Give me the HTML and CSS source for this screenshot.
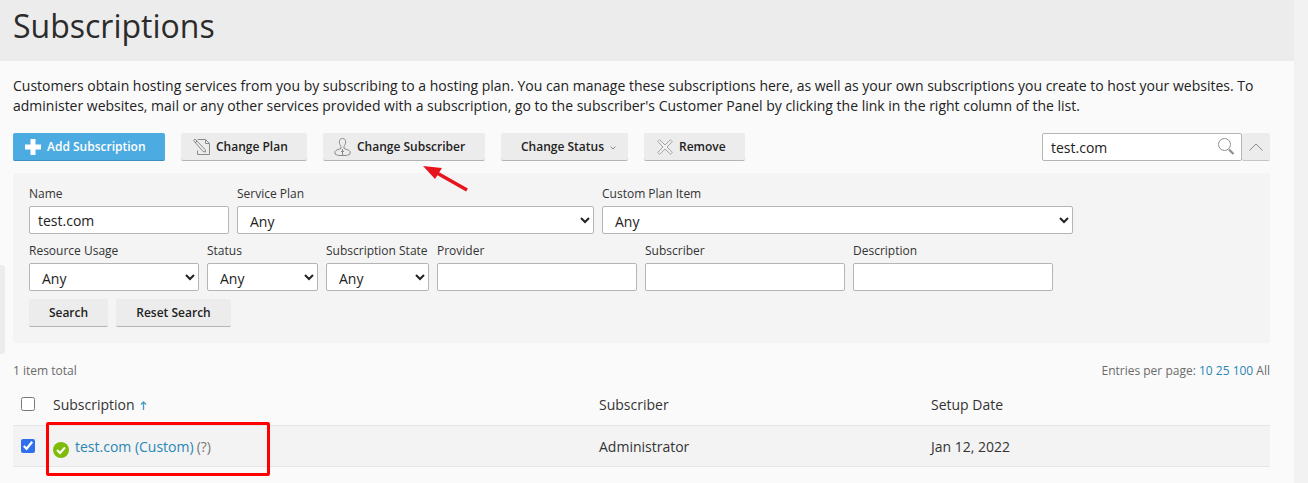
FILE: index.html
```html
<!DOCTYPE html>
<html lang="en">
<head>
<meta charset="utf-8">
<title>Subscriptions</title>
<link rel="stylesheet" href="styles.css">
</head>
<body>
<div class="handle"></div>
<main class="page">
  <header class="head"><h1>Subscriptions</h1></header>
  <div class="content">
    <p class="intro">Customers obtain hosting services from you by subscribing to a hosting plan. You can manage these subscriptions here, as well as your own subscriptions you create to host your websites. To administer websites, mail or any other services provided with a subscription, go to the subscriber's Customer Panel by clicking the link in the right column of the list.</p>
    <div class="toolbar">
      <button class="btn primary add"><svg class="ic" width="16" height="16" viewBox="0 0 16 16"><path d="M5.500 0h5v5.500H16v5h-5.500V16h-5v-5.500H0v-5h5.500z" fill="#fff"/></svg>Add Subscription</button>
      <button class="btn plan"><svg class="ic" width="17" height="18" viewBox="0 0 17 18" fill="none" stroke="#8a8a8a"><path d="M4.500 1.500h8l4 4v11h-12v-4"/><path d="M12.500 1.500v4h4"/><path d="M.5 2.500l1.500-1.500 10 10.500.5 2.500-2.500-.5z" fill="#ececec"/><path d="M2 5l2-2" stroke="#777"/></svg>Change Plan</button>
      <button class="btn subs"><svg class="ic" width="17" height="18" viewBox="0 0 17 18" fill="none" stroke="#8a8a8a"><path d="M8.500 .5c-2.200 0-3.200 1.600-3.200 3.500 0 2 1.200 3.300 1.700 4.500v2c-1.500.7-5.500 1.500-6 3v2.500c1.500 1 3.500 1.500 5 1.500h5c1.500 0 3.500-.5 5-1.500V13.500c-.5-1.500-4.500-2.300-6-3v-2c.5-1.200 1.700-2.500 1.700-4.500 0-1.900-1-3.500-3.200-3.500z"/><path d="M7 13.500h3M8.500 11v6.500"/></svg>Change Subscriber</button>
      <button class="btn status">Change Status<svg class="caret" width="6" height="4" viewBox="0 0 6 4" fill="none" stroke="#888"><path d="M.5.500l2.500 2.500 2.500-2.500"/></svg></button>
      <button class="btn remove"><svg class="ic" width="16" height="16" viewBox="0 0 16 16" fill="#f4f4f4" stroke="#a0a0a0"><path d="M2.500 .8L8 6l5.500-5.200 1.700 1.700L10 8l5.200 5.500-1.700 1.700L8 10l-5.500 5.200-1.700-1.700L6 8 .8 2.500z"/></svg>Remove</button>
      <div class="quick">
        <div class="quick-box"><span>test.com</span><svg width="18" height="18" viewBox="0 0 18 18" fill="none" stroke="#8f8f8f"><circle cx="6.500" cy="6.500" r="6"/><path d="M11 11.500l4.500 4.500" stroke-width="2.200"/></svg></div>
        <button class="toggle"><svg width="14" height="8" viewBox="0 0 14 8" fill="none" stroke="#8a8a8a"><path d="M.5 7.500L7 1l6.500 6.500"/></svg></button>
      </div>
    </div>
    <form class="filters">
      <div class="row">
        <label class="field w-name">Name<input type="text" value="test.com"></label>
        <label class="field w-plan">Service Plan<select><option>Any</option></select></label>
        <label class="field w-item">Custom Plan Item<select><option>Any</option></select></label>
      </div>
      <div class="row">
        <label class="field w-res">Resource Usage<select><option>Any</option></select></label>
        <label class="field w-stat">Status<select><option>Any</option></select></label>
        <label class="field w-state">Subscription State<select><option>Any</option></select></label>
        <label class="field w-name">Provider<input type="text"></label>
        <label class="field w-name">Subscriber<input type="text"></label>
        <label class="field w-name">Description<input type="text"></label>
      </div>
      <div class="actions">
        <button type="button" class="btn search">Search</button>
        <button type="button" class="btn reset">Reset Search</button>
      </div>
    </form>
    <div class="meta">
      <span>1 item total</span>
      <span>Entries per page: <a>10</a> <a>25</a> <a>100</a> All</span>
    </div>
    <div class="table">
      <div class="tr th">
        <div class="c-check"><input type="checkbox"></div>
        <div class="c-sub">Subscription <svg class="sort" width="7" height="9" viewBox="0 0 7 9" fill="none" stroke="#4a9cc4" stroke-width="1.300"><path d="M3.500 9V1M1 3.500L3.500 1 6 3.500"/></svg></div>
        <div class="c-owner">Subscriber</div>
        <div>Setup Date</div>
      </div>
      <div class="tr td">
        <div class="c-check"><input type="checkbox" checked></div>
        <div class="c-sub"><svg class="ok" width="16" height="16" viewBox="0 0 16 16"><circle cx="8" cy="8" r="8" fill="#7fbc0a"/><path d="M4 8l3 3 5-5.500" fill="none" stroke="#fff" stroke-width="2"/></svg><a>test.com (Custom)</a><span class="hint">(?)</span></div>
        <div class="c-owner">Administrator</div>
        <div>Jan 12, 2022</div>
      </div>
    </div>
  </div>
</main>
<div class="mark"></div>
<svg class="arrow" width="46" height="30" viewBox="0 0 46 30"><path d="M44 24L14 7" stroke="#e8141c" stroke-width="3.500" fill="none"/><path d="M0 0l19 2-7 11z" fill="#e8141c"/></svg>
</body>
</html>
```
FILE: styles.css
```css
* { box-sizing: border-box; }
html, body { margin: 0; height: 483px; overflow: hidden; }
body { background: #f2f2f2; font-family: "Open Sans", sans-serif; color: #222; font-size: 14px; }
.page { width: 1294px; height: 483px; background: #fafafa; }
.head { height: 61px; background: #ececec; padding-left: 13px; }
h1 { margin: 0; font-size: 32px; font-weight: 400; line-height: 52px; color: #2b2b2b; }
.content { padding: 15px 24px 0 13px; }
.intro { margin: 0; font-size: 14px; line-height: 20px; color: #222; height: 40px; width: 1257px; }
.toolbar { display: flex; align-items: flex-start; margin-top: 17px; height: 28px; }
.btn { height: 28px; border: 0; border-bottom: 1px solid #b5b5b5; border-radius: 2px; background: #ececec; font: 600 12px/27px "Open Sans", sans-serif; color: #222; padding: 0; display: inline-flex; align-items: center; justify-content: center; white-space: nowrap; }
.ic { margin-right: 6px; flex: none; }
.primary { background: #4cabe0; border-bottom-color: #3a8fbf; color: #fff; }
.add { width: 152px; margin-right: 16px; justify-content: flex-start; padding-left: 12px; }
.plan { width: 126px; margin-right: 16px; justify-content: flex-start; padding-left: 12px; }
.subs { width: 162px; margin-right: 16px; justify-content: flex-start; padding-left: 11px; }
.status { width: 127px; margin-right: 16px; justify-content: flex-start; padding-left: 20px; }
.caret { margin-left: 6px; margin-top: 2px; }
.remove { width: 101px; justify-content: flex-start; padding-left: 13px; }
.quick { margin-left: auto; display: flex; }
.quick-box { width: 200px; height: 28px; background: #fff; border: 1px solid #b5b5b5; border-radius: 2px; display: flex; align-items: center; justify-content: space-between; padding: 0 5px 0 8px; font-size: 14px; }
.toggle { width: 28px; height: 28px; border: 0; border-bottom: 1px solid #c4c4c4; background: #ececec; border-radius: 2px; padding: 0; }
.filters { margin-top: 12px; height: 170px; width: 1257px; background: #f4f4f4; border-radius: 2px; padding: 12px 16px 0; }
.row { display: flex; gap: 8px; height: 57px; }
.field { display: flex; flex-direction: column; font-size: 12px; line-height: 18px; color: #333; }
.field input, .field select { margin-top: 3px; height: 28px; width: 100%; background: #fff; border: 1px solid #b5b5b5; border-radius: 2px; font: 14px "Open Sans", sans-serif; color: #222; padding: 0 8px; }
.field select { padding: 2px 8px 0; }
.w-name { width: 200px; }
.w-plan { width: 357px; }
.w-item { width: 471px; }
.w-res { width: 170px; }
.w-stat { width: 111px; }
.w-state { width: 103px; }
.actions { display: flex; gap: 8px; }
.search { width: 79px; }
.reset { width: 115px; }
.meta { display: flex; justify-content: space-between; margin-top: 19px; font-size: 12px; line-height: 18px; color: #6b6b6b; height: 18px; }
.meta a { color: #2a86b5; }
.table { margin-top: 12px; }
.tr { display: flex; align-items: center; font-size: 14px; color: #333; }
.th { height: 33px; padding-bottom: 9px; }
.td { height: 42px; background: #f3f3f3; border-top: 1px solid #e6e6e6; border-bottom: 1px solid #e6e6e6; }
.c-check { width: 40px; display: flex; padding-left: 8px; }
.c-check input { margin: 0; width: 14px; height: 14px; accent-color: #2f6fed; }
.c-sub { width: 546px; display: flex; align-items: center; white-space: pre; }
.c-owner { width: 332px; }
.sort { margin-left: 2px; margin-top: 3px; }
.ok { margin-right: 6px; margin-top: 7px; }
.c-sub a { color: #2a86b5; }
.hint { color: #777; font-size: 14px; margin-left: 3px; }
.handle { position: absolute; left: 0; top: 265px; width: 5px; height: 89px; background: #ececec; border-radius: 0 3px 3px 0; }
.mark { position: absolute; left: 46px; top: 422px; width: 224px; height: 54px; border: 3px solid #f00; border-radius: 2px; }
.arrow { position: absolute; left: 423px; top: 166px; }
```
